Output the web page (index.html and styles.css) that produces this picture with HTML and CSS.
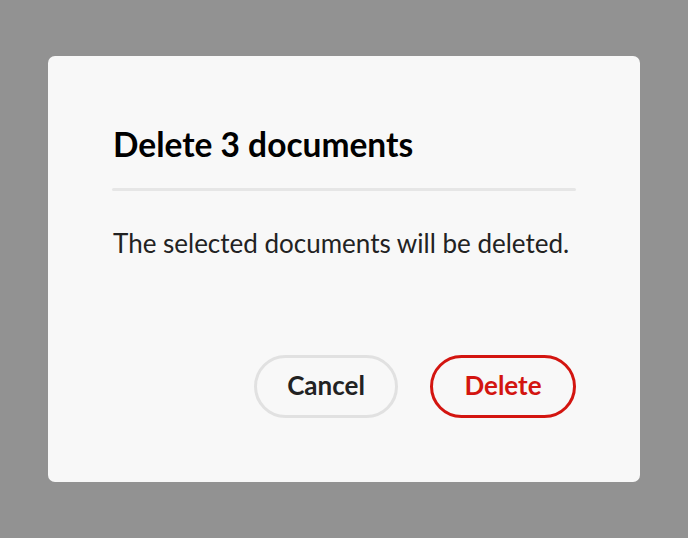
FILE: index.html
```html
<!DOCTYPE html>
<html lang="en">
<head>
<meta charset="utf-8">
<title>Delete 3 documents</title>
<link rel="stylesheet" href="styles.css">
</head>
<body>
<div class="underlay">
  <section class="dialog" role="alertdialog" aria-labelledby="dlg-title">
    <h2 class="dialog-title" id="dlg-title">Delete 3 documents</h2>
    <hr class="dialog-divider">
    <p class="dialog-content">The selected documents will be deleted.</p>
    <div class="button-group">
      <button class="btn btn-secondary" type="button">Cancel</button>
      <button class="btn btn-negative" type="button">Delete</button>
    </div>
  </section>
</div>
</body>
</html>
```
FILE: styles.css
```css
html, body {
  margin: 0;
  height: 100%;
}
body {
  background: #929292;
  font-family: "Lato", "Open Sans", sans-serif;
}
.underlay {
  height: 100%;
  display: flex;
  align-items: center;
  justify-content: center;
}
.dialog {
  box-sizing: border-box;
  width: 592px;
  height: 426px;
  background: #f8f8f8;
  border-radius: 7px;
  padding: 68px 64px 64px 64px;
  display: flex;
  flex-direction: column;
}
.dialog-title {
  margin: 0 0 0 1px;
  font-size: 33.5px;
  font-weight: 700;
  line-height: 40px;
  color: #000;
}
.dialog-divider {
  margin: 24px 0 0;
  border: 0;
  height: 3px;
  border-radius: 2px;
  background: #e6e6e6;
}
.dialog-content {
  margin: 36px 0 0 1px;
  font-size: 26px;
  line-height: 32px;
  color: #222;
}
.button-group {
  margin-top: auto;
  display: flex;
  justify-content: flex-end;
  gap: 32px;
}
.btn {
  box-sizing: border-box;
  height: 63px;
  padding: 0 28px 3px;
  border-radius: 32px;
  border: 3px solid #e1e1e1;
  background: transparent;
  font-family: inherit;
  font-size: 26px;
  font-weight: 700;
  color: #222;
}
.btn-secondary {
  min-width: 144px;
}
.btn-negative {
  min-width: 146px;
  border-color: #d31510;
  color: #d31510;
}
```
